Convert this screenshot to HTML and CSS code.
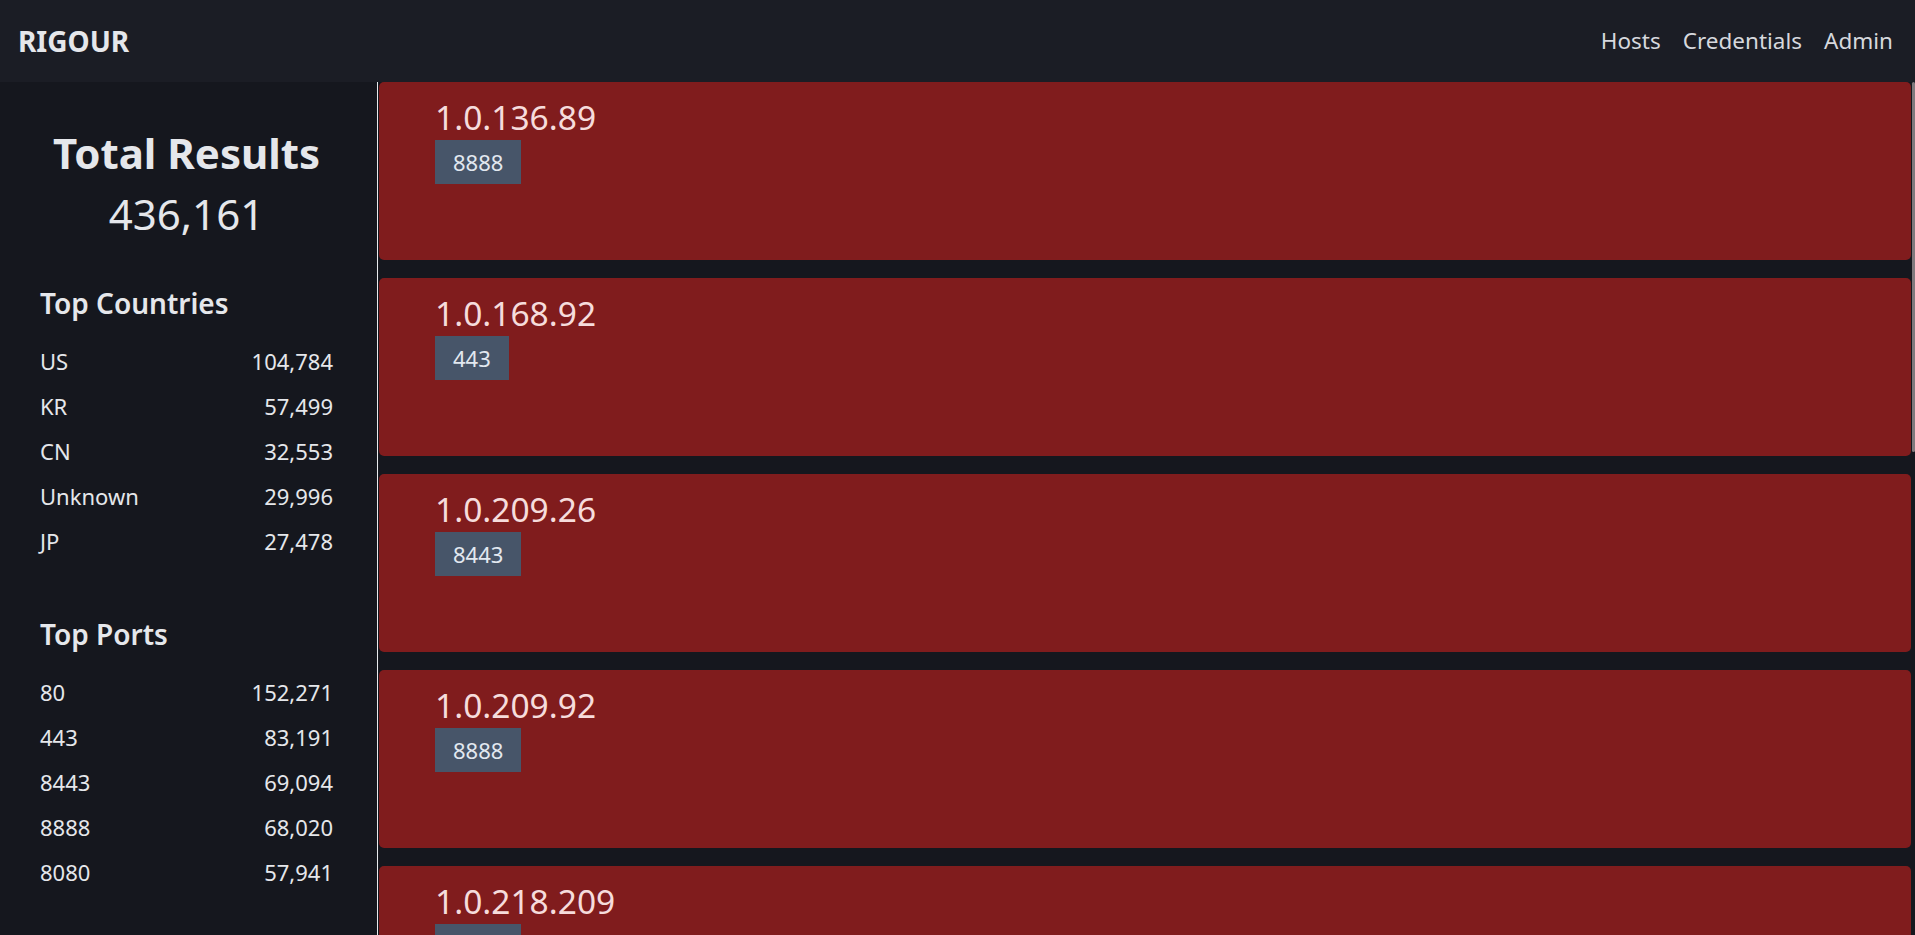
FILE: index.html
```html
<!DOCTYPE html>
<html lang="en">
<head>
<meta charset="utf-8">
<title>RIGOUR</title>
<link rel="stylesheet" href="styles.css">
</head>
<body>
<header class="topbar">
  <div class="brand">RIGOUR</div>
  <nav class="nav">
    <a href="#">Hosts</a>
    <a href="#">Credentials</a>
    <a href="#">Admin</a>
  </nav>
</header>
<div class="layout">
  <aside class="sidebar">
    <div class="total">
      <h1 class="total-title">Total Results</h1>
      <div class="total-count">436,161</div>
    </div>
    <section class="stats">
      <h2 class="stats-title">Top Countries</h2>
      <ul class="stats-list">
        <li><span>US</span><span>104,784</span></li>
        <li><span>KR</span><span>57,499</span></li>
        <li><span>CN</span><span>32,553</span></li>
        <li><span>Unknown</span><span>29,996</span></li>
        <li><span>JP</span><span>27,478</span></li>
      </ul>
    </section>
    <section class="stats">
      <h2 class="stats-title">Top Ports</h2>
      <ul class="stats-list">
        <li><span>80</span><span>152,271</span></li>
        <li><span>443</span><span>83,191</span></li>
        <li><span>8443</span><span>69,094</span></li>
        <li><span>8888</span><span>68,020</span></li>
        <li><span>8080</span><span>57,941</span></li>
      </ul>
    </section>
  </aside>
  <div class="results-pane">
    <main class="results">
      <article class="host"><div class="host-ip">1.0.136.89</div><span class="port">8888</span></article>
      <article class="host"><div class="host-ip">1.0.168.92</div><span class="port">443</span></article>
      <article class="host"><div class="host-ip">1.0.209.26</div><span class="port">8443</span></article>
      <article class="host"><div class="host-ip">1.0.209.92</div><span class="port">8888</span></article>
      <article class="host"><div class="host-ip">1.0.218.209</div><span class="port">8080</span></article>
      <article class="host"><div class="host-ip">1.0.228.37</div><span class="port">80</span></article>
      <article class="host"><div class="host-ip">1.0.241.15</div><span class="port">8443</span></article>
      <article class="host"><div class="host-ip">1.0.244.188</div><span class="port">443</span></article>
      <article class="host"><div class="host-ip">1.0.251.62</div><span class="port">8080</span></article>
      <article class="host"><div class="host-ip">1.1.12.204</div><span class="port">80</span></article>
    </main>
    <div class="scroll-thumb"></div>
  </div>
</div>
</body>
</html>
```
FILE: styles.css
```css
html, body {
  margin: 0;
  padding: 0;
  height: 100%;
}
body {
  background: #15171e;
  color: #e5e7eb;
  font-family: "Noto Sans", "Open Sans", sans-serif;
  display: flex;
  flex-direction: column;
  overflow: hidden;
}
.topbar {
  height: 82px;
  flex: 0 0 82px;
  box-sizing: border-box;
  background: #1b1d25;
  display: flex;
  align-items: center;
  justify-content: space-between;
  padding: 0 22px 2px 18px;
}
.brand {
  font-size: 28px;
  font-weight: 700;
  color: #e5e7eb;
  line-height: normal;
  padding-top: 2px;
}
.nav {
  display: flex;
  gap: 22px;
}
.nav a {
  font-size: 22.5px;
  color: #d6d8dd;
  text-decoration: none;
  line-height: normal;
}
.layout {
  flex: 1;
  min-height: 0;
  display: flex;
}
.sidebar {
  width: 378px;
  flex: 0 0 378px;
  box-sizing: border-box;
  border-right: 1px solid #e8e9ec;
  padding: 42px 44px 0 40px;
  background: #15171e;
}
.total {
  text-align: center;
}
.total-title {
  margin: 0;
  font-size: 42px;
  font-weight: 700;
  line-height: normal;
  color: #e5e7eb;
}
.total-count {
  margin-top: 4px;
  font-size: 42px;
  line-height: normal;
  color: #e5e7eb;
}
.stats {
  margin-top: 42px;
}
.stats-title {
  margin: 0 0 17px;
  font-size: 28px;
  font-weight: 600;
  line-height: normal;
  color: #e5e7eb;
}
.stats-list {
  list-style: none;
  margin: 0;
  padding: 0 0 9px;
}
.stats-list li {
  display: flex;
  justify-content: space-between;
  font-size: 22px;
  line-height: 45px;
  color: #e5e7eb;
}
.results-pane {
  flex: 1;
  min-width: 0;
  position: relative;
  display: flex;
}
.results {
  flex: 1;
  min-width: 0;
  overflow-y: auto;
  scrollbar-width: none;
  padding: 0 4px 0 1px;
}
.scroll-thumb {
  position: absolute;
  top: 0;
  right: 0;
  width: 3px;
  height: 370px;
  border-radius: 2px;
  background: rgba(235, 220, 220, 0.5);
}
.host {
  height: 178px;
  box-sizing: border-box;
  margin-bottom: 18px;
  padding: 12px 56px;
  background: #801c1d;
  border-radius: 5px;
}
.host-ip {
  font-size: 33.5px;
  line-height: normal;
  color: #f6dcdc;
}
.port {
  display: inline-block;
  font-size: 22px;
  line-height: normal;
  padding: 7px 18px;
  background: #475569;
  color: #e2e8f0;
}
```
